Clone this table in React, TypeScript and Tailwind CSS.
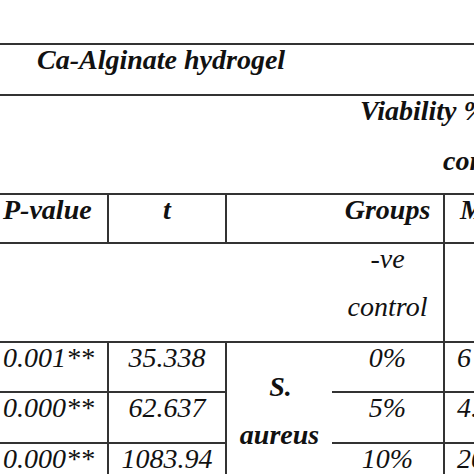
const rows = [
  { p: "0.001**", t: "35.338", g: "0%", m: "6 ", h: "h-[50px]" },
  { p: "0.000**", t: "62.637", g: "5%", m: "4.17", h: "h-[51px]" },
  { p: "0.000**", t: "1083.94", g: "10%", m: "20.6", h: "h-[50px]" },
];

export default function App() {
  return (
    <div
      className="w-[474px] h-[474px] overflow-hidden bg-white text-[#111] text-[28px] italic leading-[30px] whitespace-nowrap"
      style={{ fontFamily: '"Liberation Serif", "Times New Roman", serif' }}
    >
      {/* title row */}
      <div className="mt-[43px] h-[51px] border-t-2 border-[#333] pl-[37px] font-bold">
        Ca-Alginate hydrogel
      </div>

      {/* viability header */}
      <div className="h-[99px] border-t-2 border-[#333] font-bold overflow-hidden">
        <div className="h-[50px] pl-[360px]">Viability % of</div>
        <div className="pl-[443px]">control</div>
      </div>

      {/* column headers */}
      <div className="flex h-[49px] border-t-2 border-[#333] font-bold">
        <div className="w-[107px] shrink-0 pl-[3px]">P-value</div>
        <div className="w-[118px] shrink-0 border-l-2 border-[#333] text-center">t</div>
        <div className="w-[218px] shrink-0 border-l-2 border-[#333] flex">
          <div className="w-[105px] shrink-0" />
          <div className="flex-1 text-center">Groups</div>
        </div>
        <div className="flex-1 border-l-2 border-[#333] pl-[15px] overflow-hidden">Mean</div>
      </div>

      {/* control row */}
      <div className="flex h-[99px] border-t-2 border-[#333]">
        <div className="w-[332px] shrink-0" />
        <div className="w-[111px] shrink-0 text-center">
          <div className="h-[48px]">-ve</div>
          <div>control</div>
        </div>
        <div className="flex-1 border-l-2 border-[#333]" />
      </div>

      {/* S. aureus block */}
      <div className="flex h-[151px]">
        <div className="w-[225px] shrink-0">
          {rows.map((r) => (
            <div key={r.t} className={`flex border-t-2 border-[#333] ${r.h}`}>
              <div className="w-[107px] shrink-0 pl-[3px]">{r.p}</div>
              <div className="w-[118px] shrink-0 border-l-2 border-[#333] text-center">{r.t}</div>
            </div>
          ))}
        </div>
        <div className="w-[107px] shrink-0 border-l-2 border-t-2 border-[#333] flex flex-col items-center justify-center pt-[4px] font-bold">
          <div className="h-[48px] pl-[2px]">S.</div>
          <div className="h-[47px]">aureus</div>
        </div>
        <div className="w-[111px] shrink-0">
          {rows.map((r) => (
            <div key={r.g} className={`border-t-2 border-[#333] text-center ${r.h}`}>
              {r.g}
            </div>
          ))}
        </div>
        <div className="flex-1 border-l-2 border-[#333] overflow-hidden">
          {rows.map((r) => (
            <div key={r.m} className={`border-t-2 border-[#333] pl-[12px] ${r.h}`}>
              {r.m}
            </div>
          ))}
        </div>
      </div>
    </div>
  );
}
